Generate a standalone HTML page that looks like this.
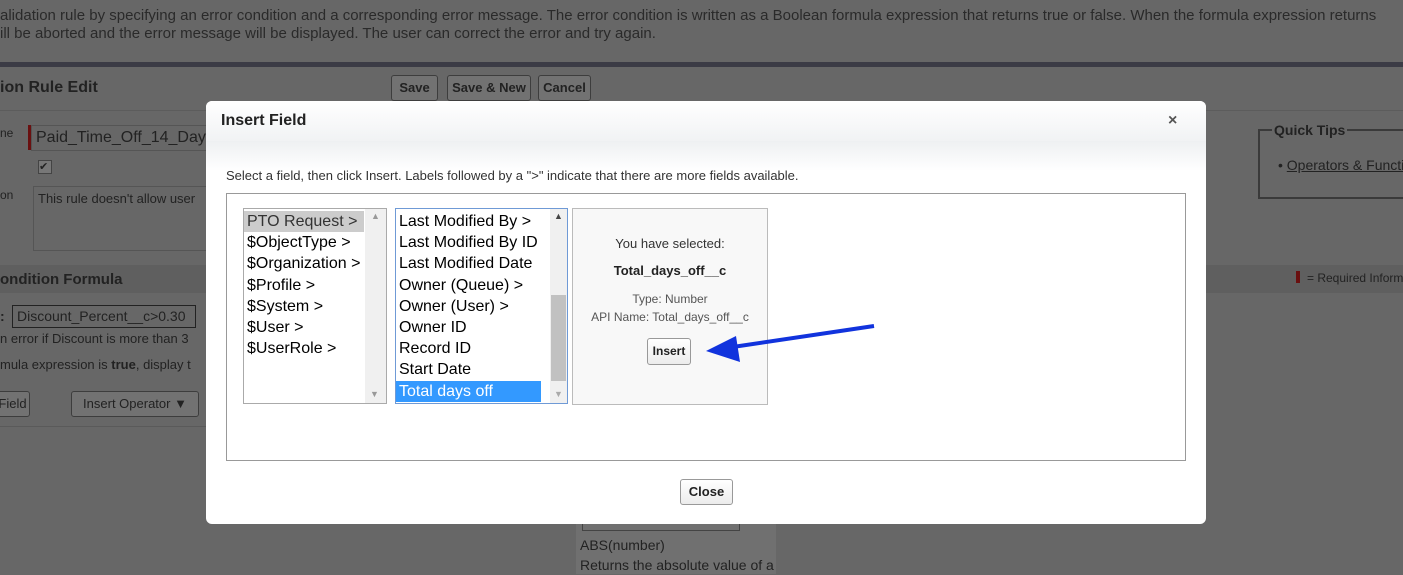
<!DOCTYPE html><html><head><style>
body{margin:0;width:1403px;height:574px;overflow:hidden;background:#676767;font-family:"Liberation Sans",sans-serif;position:relative;color:#222}
.a{position:absolute}
.btn{position:absolute;border:1px solid #3d3d3d;border-radius:3px;background:#727272;font-size:13px;font-weight:bold;color:#222;text-align:center;line-height:24px}
.m{position:absolute;left:206px;top:101px;width:1000px;height:423px;background:#fff;border-radius:6px;overflow:hidden}
.lst{position:absolute;border:1px solid #aaa;background:#fff;font-size:16px;line-height:21.2px;color:#000}
.lst div{padding-left:3px;white-space:nowrap}
.sb{position:absolute;right:0;top:0;width:17px;height:100%;background:#f0f0f0}
.wb{position:absolute;border:1px solid #999;border-radius:3px;background:linear-gradient(#fff,#ececec);font-size:13px;font-weight:bold;text-align:center}
</style></head><body>
<div class="a" style="left:0;top:7px;font-size:15px;color:#2a2a2a;line-height:18px;white-space:nowrap">alidation rule by specifying an error condition and a corresponding error message. The error condition is written as a Boolean formula expression that returns true or false. When the formula expression returns<br>ill be aborted and the error message will be displayed. The user can correct the error and try again.</div>
<div class="a" style="left:0;top:62px;width:1403px;height:5px;background:#3b3b45"></div>
<div class="a" style="left:0;top:79px;font-size:16px;font-weight:bold;color:#222">ion Rule Edit</div>
<div class="btn" style="left:391px;top:75px;width:45px">Save</div>
<div class="btn" style="left:447px;top:75px;width:82px">Save &amp; New</div>
<div class="btn" style="left:538px;top:75px;width:51px">Cancel</div>
<div class="a" style="left:0;top:110px;width:1403px;height:1px;background:#5c5c5c"></div>
<div class="a" style="left:0;top:126px;font-size:12px">ne</div>
<div class="a" style="left:28px;top:125px;width:3px;height:25px;background:#6a1010"></div>
<div class="a" style="left:31px;top:125px;width:180px;height:24px;border:1px solid #555;font-size:16px;line-height:24px;padding-left:4px">Paid_Time_Off_14_Day</div>
<div class="a" style="left:38px;top:160px;width:12px;height:12px;border:1px solid #444;background:#777;font-size:11px;line-height:12px">✔</div>
<div class="a" style="left:0;top:188px;font-size:12px">on</div>
<div class="a" style="left:33px;top:186px;width:180px;height:55px;border:1px solid #555;font-size:13px;padding:4px">This rule doesn't allow user</div>
<div class="a" style="left:0;top:265px;width:1403px;height:28px;background:#5f5f5f"></div>
<div class="a" style="left:0;top:271px;font-size:15px;font-weight:bold">ondition Formula</div>
<div class="a" style="left:1296px;top:271px;width:4px;height:12px;background:#6a1010"></div>
<div class="a" style="left:1307px;top:271px;font-size:12px;white-space:nowrap">= Required Information</div>
<div class="a" style="left:0;top:308px;font-size:14px;font-weight:bold">:</div>
<div class="a" style="left:12px;top:305px;width:178px;height:21px;border:1px solid #222;font-size:14px;line-height:21px;padding-left:4px">Discount_Percent__c&gt;0.30</div>
<div class="a" style="left:0;top:331px;font-size:13px">n error if Discount is more than 3</div>
<div class="a" style="left:0;top:357px;font-size:13px">mula expression is <b>true</b>, display t</div>
<div class="btn" style="left:-5px;top:391px;width:33px;font-weight:normal">Field</div>
<div class="btn" style="left:71px;top:391px;width:126px;font-weight:normal">Insert Operator ▼</div>
<div class="a" style="left:0;top:426px;width:206px;height:1px;background:#5a5a5a"></div>
<div class="a" style="left:1258px;top:129px;width:150px;height:66px;border:2px solid #3a3a3a;border-right:none"></div>
<div class="a" style="left:1272px;top:122px;background:#676767;font-size:14px;font-weight:bold;padding:0 2px">Quick Tips</div>
<div class="a" style="left:1278px;top:157px;font-size:14px;white-space:nowrap">• <u>Operators &amp; Functions</u></div>
<div class="a" style="left:576px;top:524px;width:200px;height:50px;background:#707070"></div>
<div class="a" style="left:582px;top:520px;width:156px;height:10px;border:1px solid #444;border-top:none"></div>
<div class="a" style="left:580px;top:535px;font-size:14px;line-height:20px">ABS(number)<br>Returns the absolute value of a</div>
<div class="m">
<div class="a" style="left:0;top:0;width:1000px;height:48px;background:linear-gradient(#fff,#eef0f2);"></div>
<div class="a" style="left:0;top:40px;width:1000px;height:30px;background:linear-gradient(#eef0f2,#fff)"></div>
<div class="a" style="left:15px;top:11px;font-size:16px;font-weight:bold;color:#222">Insert Field</div>
<div class="a" style="left:962px;top:11px;font-size:16px;font-weight:bold;color:#555">×</div>
<div class="a" style="left:20px;top:67px;font-size:13px;color:#333">Select a field, then click Insert. Labels followed by a "&gt;" indicate that there are more fields available.</div>
<div class="a" style="left:20px;top:92px;width:958px;height:266px;border:1px solid #999"></div>
<div class="lst" style="left:37px;top:107px;width:144px;height:194px;padding-top:2px;box-sizing:border-box;height:196px">
<div style="background:#ccc;width:117px;color:#333">PTO Request &gt;</div><div>$ObjectType &gt;</div><div>$Organization &gt;</div><div>$Profile &gt;</div><div>$System &gt;</div><div>$User &gt;</div><div>$UserRole &gt;</div>
<div class="sb" style="width:21px;font-size:9px;color:#999;text-align:center;line-height:14px;padding:0"><div style="padding:0">▲</div><div style="position:absolute;bottom:2px;left:5px;padding:0">▼</div></div></div>
<div class="lst" style="left:189px;top:107px;width:173px;height:196px;border-color:#6f9ad6;padding-top:2px;box-sizing:border-box">
<div>Last Modified By &gt;</div><div>Last Modified By ID</div><div>Last Modified Date</div><div>Owner (Queue) &gt;</div><div>Owner (User) &gt;</div><div>Owner ID</div><div>Record ID</div><div>Start Date</div><div style="background:#3399ff;color:#fff;width:142px">Total days off</div>
<div class="sb" style="font-size:9px;color:#444;text-align:center;padding:0"><div style="padding:0;line-height:14px">▲</div><div style="position:absolute;top:86px;left:1px;width:15px;height:86px;background:#c1c1c1;padding:0"></div><div style="position:absolute;bottom:2px;left:4px;padding:0;color:#aaa;line-height:14px">▼</div></div></div>
<div class="a" style="left:366px;top:107px;width:194px;height:195px;border:1px solid #bbb;background:#f8f8f8;text-align:center;color:#333">
<div style="margin-top:27px;font-size:13px">You have selected:</div>
<div style="margin-top:12px;font-size:13px;font-weight:bold;color:#222">Total_days_off__c</div>
<div style="margin-top:14px;font-size:12px;color:#555">Type: Number</div>
<div style="margin-top:4px;font-size:12px;color:#555">API Name: Total_days_off__c</div>
</div>
<div class="wb" style="left:441px;top:237px;width:42px;height:25px;line-height:25px;font-size:12px">Insert</div>
<div class="wb" style="left:474px;top:378px;width:51px;height:24px;line-height:24px">Close</div>
<svg class="a" style="left:490px;top:215px" width="190" height="50"><line x1="178" y1="10" x2="30" y2="32" stroke="#1133dd" stroke-width="4"/><polygon points="10,35 40,20 44,46" fill="#1133dd"/></svg>
</div>
</body></html>
